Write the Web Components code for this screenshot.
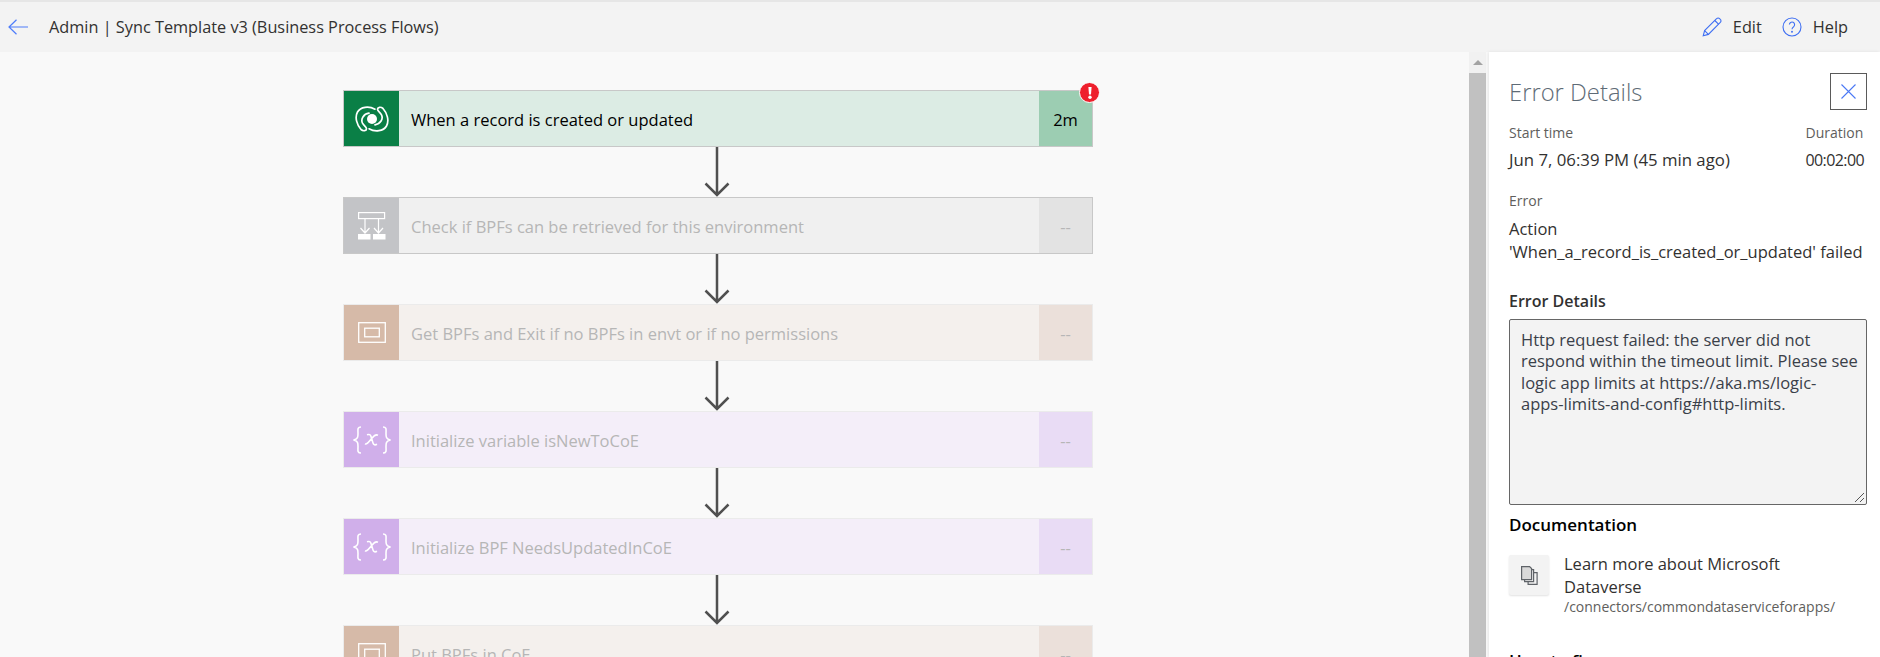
<!DOCTYPE html>
<html lang="en">
<head>
<meta charset="utf-8">
<title>Admin | Sync Template v3</title>
<style>
    html, body { margin: 0; height: 657px; overflow: hidden; background: #f9f9f9; }
    body { font-family: "Open Sans", "Liberation Sans", sans-serif; color: #323130; }
</style>
</head>
<body>
<run-page>
    <run-header slot="header">Admin | Sync Template v3 (Business Process Flows)</run-header>
    <flow-canvas slot="canvas">
        <flow-card kind="dataverse" duration="2m" active failed>When a record is created or updated</flow-card>
        <flow-arrow></flow-arrow>
        <flow-card kind="control" duration="--">Check if BPFs can be retrieved for this environment</flow-card>
        <flow-arrow></flow-arrow>
        <flow-card kind="scope" duration="--">Get BPFs and Exit if no BPFs in envt or if no permissions</flow-card>
        <flow-arrow></flow-arrow>
        <flow-card kind="variable" duration="--">Initialize variable isNewToCoE</flow-card>
        <flow-arrow></flow-arrow>
        <flow-card kind="variable" duration="--">Initialize BPF NeedsUpdatedInCoE</flow-card>
        <flow-arrow></flow-arrow>
        <flow-card kind="scope" duration="--">Put BPFs in CoE</flow-card>
    </flow-canvas>
    <error-panel slot="panel"></error-panel>
</run-page>

<script>
class RunPage extends HTMLElement {
    constructor() {
        super();
        this.attachShadow({ mode: 'open' });
    }

    connectedCallback() {
        this.shadowRoot.innerHTML = `
            <style>
                :host { display: block; height: 657px; overflow: hidden; }
                .top { height: 2px; background: #e6e6e6; }
                .body { display: flex; height: 605px; }
                .canvas { flex: 1; min-width: 0; overflow: hidden; }
                .scroll {
                    width: 17px;
                    margin-right: 3px;
                    background: #f1f1f1;
                    display: flex;
                    flex-direction: column;
                }
                .scroll i {
                    display: block;
                    height: 21px;
                    flex: none;
                    position: relative;
                }
                .scroll i::after {
                    content: "";
                    position: absolute;
                    left: 4px;
                    top: 8px;
                    border: 5px solid transparent;
                    border-top: 0;
                    border-bottom-color: #a3a3a3;
                }
                .scroll b { display: block; flex: 1; background: #c1c1c1; }
                .panel { width: 391px; flex: none; background: #fff; box-shadow: -1px 0 3px rgba(0,0,0,.08); overflow: hidden; }
            </style>
            <div class="top"></div>
            <slot name="header"></slot>
            <div class="body">
                <div class="canvas"><slot name="canvas"></slot></div>
                <div class="scroll"><i></i><b></b></div>
                <div class="panel"><slot name="panel"></slot></div>
            </div>
        `;
    }
}

class RunHeader extends HTMLElement {
    constructor() {
        super();
        this.attachShadow({ mode: 'open' });
    }

    connectedCallback() {
        this.shadowRoot.innerHTML = `
            <style>
                :host {
                    display: flex;
                    align-items: center;
                    height: 50px;
                    background: #f3f3f3;
                    font-size: 16.3px;
                    color: #323130;
                }
                .back { width: 20px; height: 16px; margin: 0 21px 0 8px; flex: none; }
                .title { flex: 1; white-space: nowrap; }
                .action { display: flex; align-items: center; gap: 11px; }
                .action svg { flex: none; display: block; }
                .edit { margin-right: 20px; }
                .help { margin-right: 32px; }
            </style>
            <svg class="back" viewBox="0 0 20 16" fill="none" stroke="#4f7dfa" stroke-width="1.2">
                <path d="M1 8h19M8.500 .8 1 8l7.500 7.200"/>
            </svg>
            <div class="title"><slot></slot></div>
            <div class="action edit">
                <svg width="20" height="20" viewBox="0 0 20 20" fill="none" stroke="#3f6ff2" stroke-width="1.100">
                    <path d="M1.200 18.800 2.600 13.600 14.600 1.700a2 2 0 0 1 3 0l.7.700a2 2 0 0 1 0 3L6.400 17.400z"/>
                    <path d="M12.800 3.500l3.700 3.700M2.600 13.600l3.800 3.800"/>
                </svg>
                <span>Edit</span>
            </div>
            <div class="action help">
                <svg width="20" height="20" viewBox="0 0 20 20" fill="none" stroke="#3f6ff2" stroke-width="1.100">
                    <circle cx="10" cy="10" r="9"/>
                    <path d="M7.400 7.600a2.600 2.600 0 1 1 4.200 2.100c-1 .7-1.600 1.200-1.600 2.500"/>
                    <circle cx="10" cy="14.800" r=".4" fill="#3f6ff2"/>
                </svg>
                <span>Help</span>
            </div>
        `;
    }
}

class FlowCanvas extends HTMLElement {
    constructor() {
        super();
        this.attachShadow({ mode: 'open' });
    }

    connectedCallback() {
        this.shadowRoot.innerHTML = `
            <style>
                :host {
                    display: flex;
                    flex-direction: column;
                    align-items: flex-start;
                    padding: 38px 0 0 343px;
                }
            </style>
            <slot></slot>
        `;
    }
}

const CARD_KINDS = {
    dataverse: { icon: '#0a7f46', body: '#dcece4', dur: '#9ccdb2', line: '#c8c8c8' },
    control: { icon: '#c3c4c7', body: '#f0f0f0', dur: '#e3e3e3', line: '#c8c8c8' },
    scope: { icon: '#d6baa8', body: '#f4f0ed', dur: '#ebe0da', line: '#ebebeb' },
    variable: { icon: '#d0afea', body: '#f4eef9', dur: '#e9dcf5', line: '#ebebeb' }
};

const DATAVERSE_LOBE = 'M20 3.200C14 -.2 5.500 .6 2.500 6 -.5 11.500 2 19 6 23.500c2.200 2 5.500 1.500 5.500-.8 0-1.800-2.500-2.700-4-5.500C5.500 13 8.500 8 14 7.200';

const CARD_ICONS = {
    dataverse: `<svg width="34" height="26" viewBox="0 0 34 26" fill="none" stroke="#fff" stroke-width="1.700" stroke-linecap="round">
        <path d="${DATAVERSE_LOBE}"/>
        <path d="${DATAVERSE_LOBE}" transform="rotate(180 17 13)"/>
        <circle cx="17" cy="13" r="5" fill="#fff" stroke="none"/>
    </svg>`,
    control: `<svg width="28" height="28" viewBox="0 0 28 28" fill="none" stroke="#fff" stroke-width="1.200">
        <rect x=".6" y=".6" width="26" height="6"/>
        <path d="M7 7v14M2.500 16l4.500 5 4.500-5M20.500 7v14M16 16l4.500 5 4.500-5"/>
        <rect x="0" y="22" width="12.500" height="5.500" fill="#fff" stroke="none"/>
        <rect x="15" y="22" width="12.500" height="5.500" fill="#fff" stroke="none"/>
    </svg>`,
    scope: `<svg width="28" height="21" viewBox="0 0 28 21" fill="none" stroke="#fff" stroke-width="1.300">
        <rect x=".7" y=".7" width="26.600" height="19.600"/>
        <rect x="6.700" y="6.200" width="14.600" height="8.600"/>
    </svg>`,
    variable: `<svg width="40" height="28" viewBox="0 0 40 28" fill="none" stroke="#fff" stroke-width="1.600">
        <path d="M9 1C5 1 6 4 6 7.500S6 13 1.500 14C6 15 6 17 6 20.500S5 27 9 27"/>
        <path d="M31 1c4 0 3 3 3 6.500S34 13 38.500 14C34 15 34 17 34 20.500S35 27 31 27"/>
        <path d="M15 8.800c2.200-.8 3.400-.2 4 1.700l2 6.500c.6 1.900 2 2.400 4 1.300M26 9.200c-2.800-1.200-4.400 1-6.800 3.800-2 2.400-3.800 6-6.200 4.800"/>
    </svg>`
};

class FlowCard extends HTMLElement {
    constructor() {
        super();
        this.attachShadow({ mode: 'open' });
    }

    connectedCallback() {
        const kind = this.getAttribute('kind');
        const c = CARD_KINDS[kind];
        const active = this.hasAttribute('active');
        this.shadowRoot.innerHTML = `
            <style>
                :host {
                    display: flex;
                    position: relative;
                    width: 750px;
                    height: 57px;
                    box-sizing: border-box;
                    border: 1px solid ${c.line};
                    font-size: 16.5px;
                    color: ${active ? '#000' : '#b6b6b6'};
                }
                .icon {
                    width: 55px;
                    flex: none;
                    display: flex;
                    align-items: center;
                    justify-content: center;
                    background: ${c.icon};
                }
                .name {
                    flex: 1;
                    display: flex;
                    align-items: center;
                    padding: 1px 0 0 12px;
                    background: ${c.body};
                    white-space: nowrap;
                }
                .dur {
                    width: 53px;
                    flex: none;
                    display: flex;
                    align-items: center;
                    justify-content: center;
                    background: ${c.dur};
                    padding-top: 1px;
                }
                .badge {
                    position: absolute;
                    right: -8px;
                    top: -9px;
                    width: 21px;
                    height: 21px;
                    box-sizing: border-box;
                    border: 1.500px solid #fff;
                    border-radius: 50%;
                    background: #ee1f2c;
                    display: flex;
                    align-items: center;
                    justify-content: center;
                }
            </style>
            <div class="icon">${CARD_ICONS[kind]}</div>
            <div class="name"><slot></slot></div>
            <div class="dur">${this.getAttribute('duration')}</div>
            ${this.hasAttribute('failed') ? `<div class="badge">
                <svg width="4" height="12" viewBox="0 0 4 12" fill="#fff"><path d="M.4 0h3.200L3 7.500H1z"/><circle cx="2" cy="10.200" r="1.700"/></svg>
            </div>` : ''}
        `;
    }
}

class FlowArrow extends HTMLElement {
    constructor() {
        super();
        this.attachShadow({ mode: 'open' });
    }

    connectedCallback() {
        this.shadowRoot.innerHTML = `
            <style>
                :host { display: block; width: 750px; height: 50px; }
                svg { display: block; margin-left: 361px; }
            </style>
            <svg width="26" height="50" viewBox="0 0 26 50" fill="none" stroke="#505050" stroke-width="2.500">
                <path d="M13 0v48M1.500 36.500 13 48 24.500 36.500"/>
            </svg>
        `;
    }
}

class ErrorPanel extends HTMLElement {
    constructor() {
        super();
        this.attachShadow({ mode: 'open' });
    }

    connectedCallback() {
        this.shadowRoot.innerHTML = `
            <style>
                :host {
                    display: block;
                    padding: 21px 13px 0 20px;
                    font-size: 16.500px;
                    color: #323130;
                }
                .head { display: flex; justify-content: space-between; align-items: center; height: 37px; }
                h1 { margin: 0; font-size: 23.800px; font-weight: 300; color: #5e6b76; }
                .close {
                    width: 37px;
                    height: 37px;
                    box-sizing: border-box;
                    border: 1px solid #5a5a5a;
                    display: flex;
                    align-items: center;
                    justify-content: center;
                }
                .times { display: flex; justify-content: space-between; margin-top: 14px; padding-right: 3px; }
                .label { font-size: 14px; color: #605e5c; line-height: 18px; }
                .value { margin-top: 8px; line-height: 20px; }
                .start { font-size: 16.800px; }
                .length { font-size: 16px; letter-spacing: -.6px; }
                .error { margin-top: 22px; }
                .msg { margin-top: 7px; line-height: 23px; }
                h2 { margin: 0; font-weight: 600; line-height: 20px; }
                .details { margin-top: 28px; font-size: 16px; }
                .box {
                    position: relative;
                    margin-top: 8px;
                    height: 186px;
                    box-sizing: border-box;
                    border: 1px solid #666;
                    border-radius: 2px;
                    background: #f3f3f3;
                    padding: 9px 11px;
                    line-height: 21.300px;
                    color: #3a4049;
                    white-space: nowrap;
                }
                .grip { position: absolute; right: 1px; bottom: 1px; }
                .docs { margin-top: 10px; color: #000; font-size: 17px; }
                .doc { display: flex; gap: 15px; margin-top: 20px; }
                .tile {
                    width: 40px;
                    height: 40px;
                    flex: none;
                    display: flex;
                    align-items: center;
                    justify-content: center;
                    background: #f3f3f3;
                    border-radius: 2px;
                    box-shadow: 0 1px 2px rgba(0,0,0,.12);
                }
                .doc-title { line-height: 23px; margin-top: -3px; }
                .doc-path { font-size: 14px; line-height: 17px; color: #605e5c; }
                .fix { margin-top: 36px; color: #000; font-size: 17px; }
            </style>
            <div class="head">
                <h1>Error Details</h1>
                <div class="close">
                    <svg width="15" height="15" viewBox="0 0 15 15" stroke="#4a78f5" stroke-width="1.100"><path d="M.5.500l14 14M14.500.500l-14 14"/></svg>
                </div>
            </div>
            <div class="times">
                <div>
                    <div class="label">Start time</div>
                    <div class="value start">Jun 7, 06:39 PM (45 min ago)</div>
                </div>
                <div>
                    <div class="label">Duration</div>
                    <div class="value length">00:02:00</div>
                </div>
            </div>
            <div class="error">
                <div class="label">Error</div>
                <div class="msg">Action<br>'When_a_record_is_created_or_updated' failed</div>
            </div>
            <h2 class="details">Error Details</h2>
            <div class="box">
                Http request failed: the server did not<br>
                respond within the timeout limit. Please see<br>
                logic app limits at https://aka.ms/logic-<br>
                apps-limits-and-config#http-limits.
                <svg class="grip" width="11" height="11" viewBox="0 0 11 11" stroke="#555" fill="none"><path d="M1 10 10 1M6 10l4-4"/></svg>
            </div>
            <h2 class="docs">Documentation</h2>
            <div class="doc">
                <div class="tile">
                    <svg width="17" height="19" viewBox="0 0 17 19" fill="none" stroke="#5f6368" stroke-width="1.200">
                        <path d="M.6.600h8l2 2v11H.6z" fill="#d9d9d9"/>
                        <path d="M10.600 3.600h2v12h-9v-2"/>
                        <path d="M12.600 6.600h3.500v11.800h-9v-2.800"/>
                    </svg>
                </div>
                <div>
                    <div class="doc-title">Learn more about Microsoft<br>Dataverse</div>
                    <div class="doc-path">/connectors/commondataserviceforapps/</div>
                </div>
            </div>
            <h2 class="fix">How to fix</h2>
        `;
    }
}

customElements.define('run-page', RunPage);
customElements.define('run-header', RunHeader);
customElements.define('flow-canvas', FlowCanvas);
customElements.define('flow-card', FlowCard);
customElements.define('flow-arrow', FlowArrow);
customElements.define('error-panel', ErrorPanel);
</script>
</body>
</html>
